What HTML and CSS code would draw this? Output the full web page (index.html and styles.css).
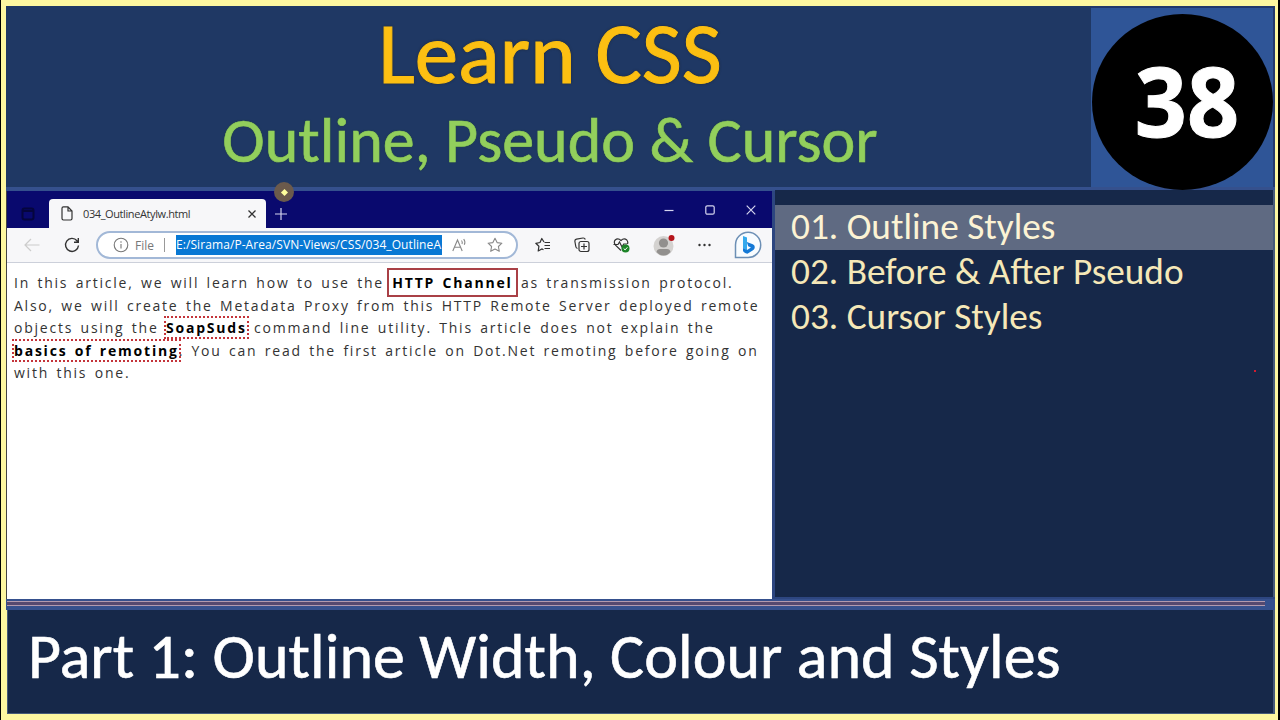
FILE: index.html
```
<!DOCTYPE html>
<html lang="en">
<head>
    <meta charset="UTF-8">
    <meta name="viewport" content="width=device-width, initial-scale=1.0">
    <title>Learn CSS - 38</title>
    <link rel="stylesheet" href="styles.css">
</head>
<body>
<div class="slide">
    <header class="top">
        <div class="titles">
            <h1><span>Learn CSS</span></h1>
            <h2><span>Outline, Pseudo &amp; Cursor</span></h2>
        </div>
        <div class="badge"><div class="circle"><span>38</span></div></div>
    </header>

    <main class="middle">
        <section class="browser">
            <div class="tabbar">
                <svg class="workspace" width="14" height="14" viewBox="0 0 14 14" fill="none" stroke="#05053d" stroke-width="2"><rect x="1.5" y="1.5" width="11" height="11" rx="2"/><path d="M2 4h10"/></svg>
                <div class="tab">
                    <svg width="12" height="15" viewBox="0 0 12 15" fill="none" stroke="#333" stroke-width="1.2"><path d="M1 2.2Q1 .8 2.4.8H7L11 5v7.600Q11 14 9.600 14H2.400Q1 14 1 12.600ZM7 .8V5H11"/></svg>
                    <span>034_OutlineAtylw.html</span>
                    <svg class="close" width="8" height="8" viewBox="0 0 8 8" stroke="#333" stroke-width="1.3"><path d="M.5.5l7 7M7.500.5l-7 7"/></svg>
                </div>
                <svg class="plus" width="12" height="12" viewBox="0 0 12 12" stroke="#d5d5ee" stroke-width="1.200"><path d="M6 0v12M0 6h12"/></svg>
                <div class="winbuttons">
                    <svg width="10" height="10" viewBox="0 0 10 10" stroke="#d5d5ee" stroke-width="1.200"><path d="M.5 5.500h9"/></svg>
                    <svg width="10" height="10" viewBox="0 0 10 10" fill="none" stroke="#d5d5ee" stroke-width="1.200"><rect x=".8" y=".8" width="8.400" height="8.400" rx="1.500"/></svg>
                    <svg width="10" height="10" viewBox="0 0 10 10" stroke="#d5d5ee" stroke-width="1.200"><path d="M.7.7l8.600 8.600M9.300.7L.7 9.300"/></svg>
                </div>
            </div>

            <div class="toolbar">
                <svg class="back" width="16" height="14" viewBox="0 0 16 14" fill="none" stroke="#ccc" stroke-width="1.200"><path d="M15.500 7H1M7 1L1 7l6 6"/></svg>
                <svg class="reload" width="16" height="16" viewBox="0 0 16 16" fill="none" stroke="#333" stroke-width="1.400"><path d="M14.500 8.500A6.500 6.500 0 1 1 13 3.700L14.300 5M14.300 1V5.200H10"/></svg>
                <div class="address">
                    <svg class="info" width="16" height="16" viewBox="0 0 16 16" fill="none" stroke="#777" stroke-width="1.100"><circle cx="8" cy="8" r="6.800"/><path d="M8 7v4.500M8 4.300v1.400"/></svg>
                    <span class="scheme">File</span>
                    <span class="bar"></span>
                    <span class="url">E:/Sirama/P-Area/SVN-Views/CSS/034_OutlineA</span>
                    <svg class="read" width="15" height="14" viewBox="0 0 15 14" fill="none" stroke="#888" stroke-width="1.100"><path d="M.8 13L5.500 2l4.700 11M2.500 9.200h6M9.500 2.500q1.300 1.500.5 3.500M11.700 1q2 2.700.6 5.800"/></svg>
                    <svg class="star" width="16" height="16" viewBox="0 0 16 16" fill="none" stroke="#888" stroke-width="1.100" stroke-linejoin="round"><path d="M8 1.200l2.100 4.400 4.800.6-3.500 3.300.9 4.800L8 12l-4.300 2.300.9-4.800L1.100 6.200l4.800-.6Z"/></svg>
                </div>
                <div class="icons">
                    <svg width="16" height="16" viewBox="0 0 16 16" fill="none" stroke="#333" stroke-width="1.200" stroke-linejoin="round"><path d="M9 5L6.800 1.500 5 5.500.8 6.300 3.900 9.300 3.200 14l3.600-2.100 1.700.8M9.500 5.500H15M9.500 8.500H15M9.500 11.500H15"/></svg>
                    <svg width="16" height="16" viewBox="0 0 16 16" fill="none" stroke="#333" stroke-width="1.200"><rect x="5" y="4.500" width="10" height="10" rx="2"/><path d="M10 6.500v6M7 9.500h6M3.500 11.500Q2 11 1.800 9.500L.9 4.500Q.6 2.600 2.500 2.200L9 1q1.800-.2 2.300 1.500"/></svg>
                    <svg width="17" height="16" viewBox="0 0 17 16" fill="none" stroke="#333" stroke-width="1.200"><path d="M8 13.500L2.500 8.200Q.3 5.200 2.200 3 5 .5 8 3.500 11 .5 13.800 3q1.600 2 .6 4M.5 7.500H5L6.500 5 9 10l1.700-3H14"/><circle cx="12.500" cy="11.500" r="4" fill="#1c8428" stroke="none"/><path d="M10.700 11.500l1.400 1.400 2.300-2.600" stroke="#fff" stroke-width="1"/></svg>
                    <svg class="avatar" width="22" height="22" viewBox="0 0 22 22"><circle cx="10.500" cy="12" r="10" fill="#d4d2d0"/><circle cx="10.500" cy="9" r="4.600" fill="#92908e"/><path d="M3.500 18q.5-3 3.500-3h7q3 0 3.500 3-3 3.500-7 3.500T3.500 18" fill="#92908e"/><circle cx="18.500" cy="4" r="3" fill="#b5151c"/></svg>
                    <svg width="13" height="4" viewBox="0 0 13 4" fill="#333"><circle cx="1.500" cy="2" r="1.200"/><circle cx="6.500" cy="2" r="1.200"/><circle cx="11.500" cy="2" r="1.200"/></svg>
                    <svg class="bing" width="28" height="28" viewBox="0 0 28 28"><path d="M1.500 26.500V14A12.600 12.600 0 1 1 14 26.500Z" fill="#f8fcff" stroke="#6c8fb5" stroke-width="1.500"/><path d="M9 5l4 1.500v13L9 17Z" fill="#34a9ed"/><path d="M9 17l4 2 4-2.600-2.800-1.200-1.400-4.200 6 2.300q2.500 1.200 1.800 3.900-.4 1.500-2 2.300l-5.200 3.200q-3.800-.8-4.400-3Z" fill="#1479d6"/></svg>
                </div>
            </div>

            <article class="page">
                <p>In this article, we will learn how to use the <b class="solid">HTTP Channel</b> as transmission protocol.</p>
                <p>Also, we will create the Metadata Proxy from this HTTP Remote Server deployed remote</p>
                <p>objects using the <b class="dotted">SoapSuds</b> command line utility. This article does not explain the</p>
                <p><b class="dotted">basics of remoting</b>. You can read the first article on Dot.Net remoting before going on</p>
                <p>with this one.</p>
            </article>
            <div class="pointer"></div>
        </section>

        <ul class="topics">
            <li class="active">01. Outline Styles</li>
            <li>02. Before &amp; After Pseudo</li>
            <li>03. Cursor Styles</li>
        </ul>
        <div class="laser"></div>
    </main>

    <div class="rule"><div></div></div>
    <footer>Part 1: Outline Width, Colour and Styles</footer>
</div>
</body>
</html>
```
FILE: styles.css
```
* {
    box-sizing: border-box;
}
body {
    margin: 0;
    background: #000;
    font-family: Carlito, Lato, sans-serif;
}
h1, h2, p, ul {
    margin: 0;
    padding: 0;
    font-weight: normal;
}
svg {
    display: block;
    flex: none;
}
.slide {
    display: flex;
    flex-direction: column;
    width: 1277px;
    height: 720px;
    margin-left: 1px;
    padding: 6px 3px 6px 5px;
    background: #fdf7a0;
    overflow: hidden;
}
.top {
    display: flex;
    flex: none;
    height: 185px;
    background: #1f3864;
    border-bottom: 4px solid #35508d;
}
.titles {
    width: 1087px;
    padding-left: 3px;
    text-align: center;
    white-space: nowrap;
}
h1 {
    height: 96px;
    line-height: 94px;
    font-size: 87px;
    color: #fcbf12;
    text-shadow: 0 0 3px #222;
    -webkit-text-stroke: 1px #fcbf12;
}
h2 {
    height: 76px;
    line-height: 77px;
    font-size: 64px;
    color: #92cf5c;
    text-shadow: 0 0 2px #234a30;
    -webkit-text-stroke: .6px #92cf5c;
}
.badge {
    flex: 1;
    padding: 6px 0 0 1px;
    background: #2f5597;
    border-top: 2px solid #22386b;
    border-right: 2px solid #22386b;
}
.circle {
    width: 181px;
    height: 176px;
    border-radius: 50%;
    background: #000;
    color: #fff;
    font: bold 96px/172px "Open Sans", sans-serif;
    text-align: center;
    padding-left: 8px;
}
.circle span {
    display: inline-block;
    transform: scaleX(.95);
    -webkit-text-stroke: 1px #fff;
}
.middle {
    position: relative;
    display: flex;
    flex: none;
    height: 408px;
    background: #2d4680;
}
.browser {
    position: relative;
    width: 766px;
    margin-right: 3px;
    background: #fff;
    border-left: 1px solid #444;
    font-family: "Open Sans", sans-serif;
}
.tabbar {
    display: flex;
    align-items: center;
    height: 37px;
    padding: 8px 16px 0 14px;
    background: #09096e;
}
.tab {
    display: flex;
    align-items: center;
    width: 217px;
    height: 29px;
    margin-left: 14px;
    padding: 0 10px 0 12px;
    background: #f7f7f9;
    border-radius: 4px 4px 0 0;
    font-size: 11px;
    letter-spacing: -.4px;
    color: #333;
}
.tab span {
    margin-left: 10px;
    white-space: nowrap;
}
.close {
    margin-left: auto;
}
.plus {
    margin-left: 9px;
}
.winbuttons {
    display: flex;
    gap: 31px;
    margin: -8px 0 0 auto;
}
.toolbar {
    display: flex;
    align-items: center;
    height: 35px;
    padding-left: 17px;
    background: #f7f7f9;
    border-bottom: 1px solid #ccd0da;
}
.reload {
    margin-left: 24px;
}
.address {
    display: flex;
    align-items: center;
    width: 422px;
    height: 28px;
    margin-left: 16px;
    padding-left: 15px;
    background: #fff;
    border: 2px solid #a2b8d7;
    border-radius: 14px;
    font-size: 12px;
    color: #777;
}
.scheme {
    margin-left: 6px;
}
.bar {
    width: 1px;
    height: 14px;
    margin: 0 11px 0 10px;
    background: #999;
}
.url {
    width: 266px;
    height: 20px;
    line-height: 20px;
    letter-spacing: .08px;
    background: #0878d4;
    color: #fff;
    white-space: nowrap;
}
.read {
    margin-left: 10px;
}
.star {
    margin-left: 20px;
}
.icons {
    display: flex;
    align-items: center;
    flex: 1;
    justify-content: space-between;
    padding: 0 10px 0 17px;
}
.page {
    padding: 9px 0 0 7px;
    font-size: 14px;
    line-height: 22.600px;
    letter-spacing: 1.770px;
    word-spacing: 2px;
    color: #333;
    white-space: nowrap;
}
.page b {
    color: #000;
    letter-spacing: 1.780px;
}
.solid {
    margin: 0 1px;
    outline: 2px solid #a94046;
    outline-offset: 3px;
}
.dotted {
    outline: 2px dotted #c4343a;
}
/* highlighted mouse position */
.pointer {
    position: absolute;
    left: 267px;
    top: -9px;
    width: 20px;
    height: 20px;
    border-radius: 50%;
    background: #6b5a4c;
}
.pointer::after {
    content: "";
    position: absolute;
    left: 8px;
    top: 8px;
    width: 5px;
    height: 5px;
    background: #ffff9c;
    transform: rotate(45deg);
}
.topics {
    flex: 1;
    margin-top: -1px;
    margin-bottom: 2px;
    padding-top: 15px;
    background: #162849;
    border-right: 2px solid #465a78;
    list-style: none;
    font-size: 37.300px;
    line-height: 43px;
    color: #f5e8b8;
}
.topics li {
    height: 45px;
    padding-left: 16px;
}
.topics .active {
    background: #5f6a82;
    color: #fcf3d4;
}
.laser {
    position: absolute;
    left: 1248px;
    top: 179px;
    width: 2px;
    height: 2px;
    background: #d01c30;
}
.rule {
    flex: none;
    height: 11px;
    padding: 2px 10px 0 1px;
    background: #35508d;
}
.rule div {
    height: 5px;
    background: #554970;
    border-top: 1px solid #b29aae;
    border-bottom: 1px solid #b29aae;
}
footer {
    flex: 1;
    margin-left: 1px;
    padding-left: 20px;
    background: #162849;
    border: 1px solid #465a78;
    border-width: 0 2px 1px 1px;
    font-size: 64px;
    line-height: 93px;
    color: #fff;
    white-space: nowrap;
    -webkit-text-stroke: .6px #fff;
}
```
